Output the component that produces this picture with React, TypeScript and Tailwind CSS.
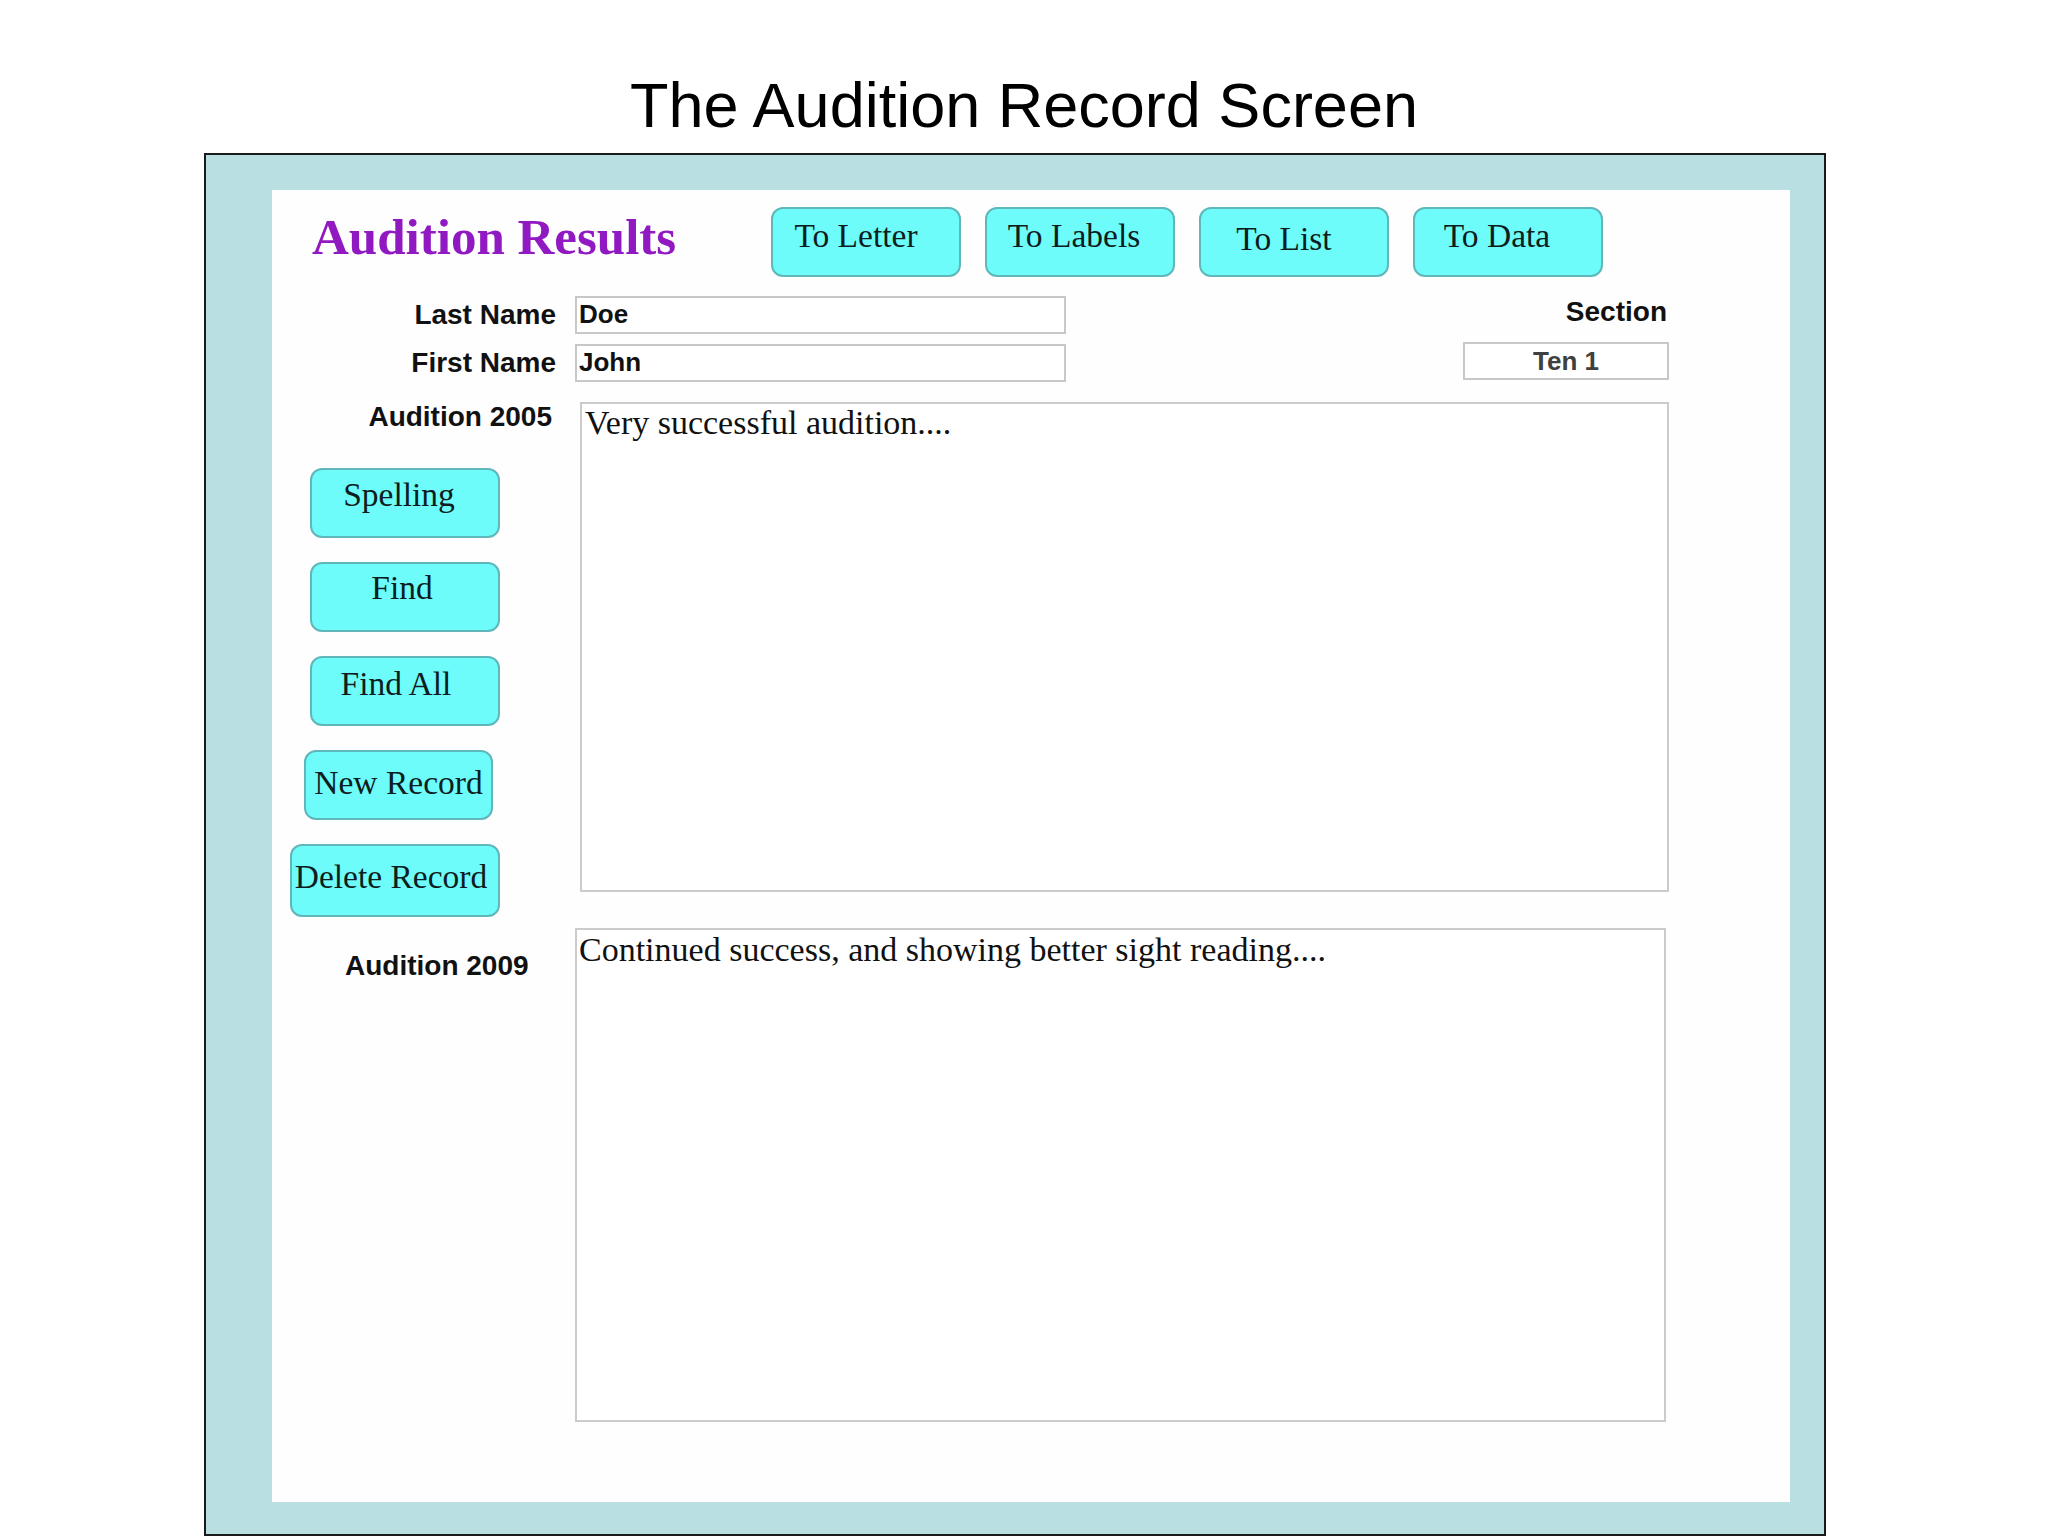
const serif = "font-['Liberation_Serif','Times_New_Roman',serif]"
const sans = "font-['Liberation_Sans',Arial,sans-serif]"

function CyanButton({ label, className = '' }: { label: string; className?: string }) {
  return (
    <button
      type="button"
      className={`flex shrink-0 items-start justify-center whitespace-nowrap rounded-[12px] border-2 border-[#5fb7ba] bg-[#6dfcfa] text-[33.5px] leading-none text-[#0d1d20] ${serif} ${className}`}
    >
      {label}
    </button>
  )
}

function Field({ value }: { value: string }) {
  return (
    <div className={`h-[38px] w-[491px] border-2 border-[#c8c8c8] bg-white pl-[2px] pt-[3px] text-[26px] font-bold leading-none text-[#111] ${sans}`}>
      {value}
    </div>
  )
}

function Label({ children, className = '' }: { children: string; className?: string }) {
  return (
    <span className={`whitespace-nowrap text-[28px] font-bold leading-none text-[#111] ${sans} ${className}`}>
      {children}
    </span>
  )
}

export default function App() {
  return (
    <div className="h-[1536px] w-[2048px] overflow-hidden bg-white">
      <h1 className={`pt-[74px] text-center text-[63px] leading-none text-black ${sans}`}>
        The Audition Record Screen
      </h1>

      {/* blue frame around the form */}
      <div className="ml-[204px] mt-[16px] h-[1383px] w-[1622px] border-2 border-[#1a1a1a] bg-[#b9dfe3] pb-[32px] pl-[66px] pr-[34px] pt-[35px]">
        <div className="flex h-full flex-col bg-[#fefefe] pt-[17px]">
          {/* header + navigation */}
          <div className="flex h-[70px] items-start">
            <div className="w-[499px] shrink-0 pl-[40px]">
              <h2 className={`mt-[5px] text-[51px] font-bold leading-none text-[#9119c2] ${serif}`}>
                Audition Results
              </h2>
            </div>
            <div className="flex gap-6">
              <CyanButton label="To Letter" className="h-[70px] w-[190px] pr-[20px] pt-[10px]" />
              <CyanButton label="To Labels" className="h-[70px] w-[190px] pr-[12px] pt-[10px]" />
              <CyanButton label="To List" className="h-[70px] w-[190px] pr-[20px] pt-[13px]" />
              <CyanButton label="To Data" className="h-[70px] w-[190px] pr-[22px] pt-[10px]" />
            </div>
          </div>

          <div className="flex w-[1397px] flex-col">
            {/* names + section */}
            <div className="mt-[19px] flex items-start">
              <div className="flex flex-col gap-[10px]">
                <div className="flex h-[38px] items-center">
                  <div className="w-[284px] text-right">
                    <Label className="text-[27.5px]">Last Name</Label>
                  </div>
                  <div className="ml-[19px]">
                    <Field value="Doe" />
                  </div>
                </div>
                <div className="flex h-[38px] items-center">
                  <div className="w-[284px] text-right">
                    <Label className="text-[27.5px]">First Name</Label>
                  </div>
                  <div className="ml-[19px]">
                    <Field value="John" />
                  </div>
                </div>
              </div>
              <div className="ml-auto flex flex-col items-end">
                <Label className="mr-[2px] mt-[2px]">Section</Label>
                <div className={`mt-[16px] flex h-[38px] w-[206px] justify-center border-2 border-[#c8c8c8] bg-white pt-[4px] text-[26px] font-bold leading-none text-[#404040] ${sans}`}>
                  Ten 1
                </div>
              </div>
            </div>

            {/* 2005 notes + record actions */}
            <div className="mt-[20px] flex items-start">
              <div className="flex w-[308px] shrink-0 flex-col items-start">
                <div className="mt-[1px] w-full pr-[28px] text-right">
                  <Label>Audition 2005</Label>
                </div>
                <div className="mt-[36px] flex flex-col items-start gap-6">
                  <CyanButton label="Spelling" className="ml-[38px] h-[70px] w-[190px] pr-[12px] pt-[8px]" />
                  <CyanButton label="Find" className="ml-[38px] h-[70px] w-[190px] pr-[6px] pt-[7px]" />
                  <CyanButton label="Find All" className="ml-[38px] h-[70px] w-[190px] pr-[18px] pt-[9px]" />
                  <CyanButton label="New Record" className="ml-[32px] h-[70px] w-[189px] pt-[14px]" />
                  <CyanButton label="Delete Record" className="ml-[18px] h-[73px] w-[210px] pr-[8px] pt-[14px]" />
                </div>
              </div>
              <div className={`h-[490px] w-[1089px] border-2 border-[#cbcbcb] bg-white pl-[3px] pt-[2px] text-[34px] leading-none text-[#111] ${serif}`}>
                Very successful audition....
              </div>
            </div>

            {/* 2009 notes */}
            <div className="mt-[11px] flex items-start">
              <div className="w-[303px] shrink-0 pl-[73px] pt-[24px]">
                <Label>Audition 2009</Label>
              </div>
              <div className={`h-[494px] w-[1091px] border-2 border-[#cbcbcb] bg-white pl-[2px] pt-[3px] text-[34px] leading-none text-[#111] ${serif}`}>
                Continued success, and showing better sight reading....
              </div>
            </div>
          </div>
        </div>
      </div>
    </div>
  )
}
